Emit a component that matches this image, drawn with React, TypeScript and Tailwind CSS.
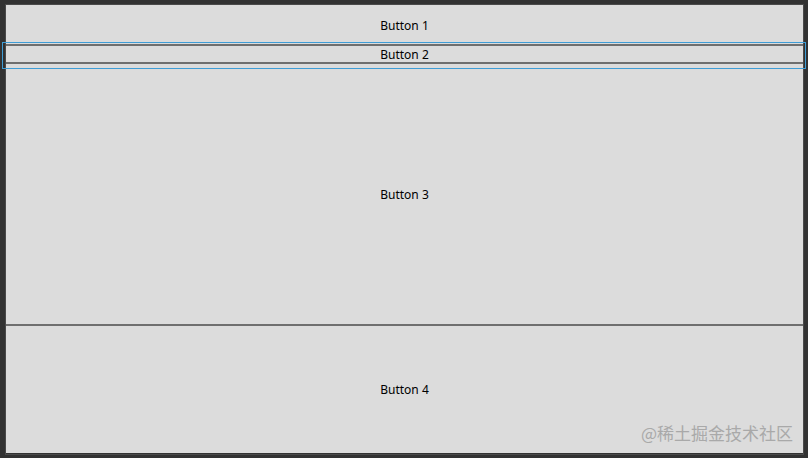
export default function App() {
  return (
    <div className="relative h-[458px] w-[808px] overflow-hidden bg-[#323232] font-['Segoe_UI','Noto_Sans','Liberation_Sans',sans-serif] text-[12px] text-black">
      <div className="absolute left-[5px] top-[4px] h-[451px] w-[799px] border border-[#4a4a4a]" />
      <div className="absolute left-[6px] top-[5px] flex h-[448px] w-[797px] flex-col bg-[#dcdcdc]">
        <div className="flex h-[39px] items-center justify-center pt-[3px]">Button 1</div>
        <div className="flex h-[20px] items-center justify-center border-y-2 border-[#6f6f6f] pt-px">Button 2</div>
        <div className="flex h-[260px] items-center justify-center pt-px">Button 3</div>
        <div className="h-[2px] bg-[#6f6f6f]" />
        <div className="flex flex-1 items-center justify-center pt-px">Button 4</div>
      </div>
      <div className="absolute left-[2px] top-[42px] h-[27px] w-[804px] border border-[#3f9dd6]" />
      <div className="absolute left-[641px] top-[422px] font-['Noto_Sans_CJK_SC',sans-serif] text-[17px] leading-[22px] text-[#a9a9a9]">
        @稀土掘金技术社区
      </div>
    </div>
  );
}
